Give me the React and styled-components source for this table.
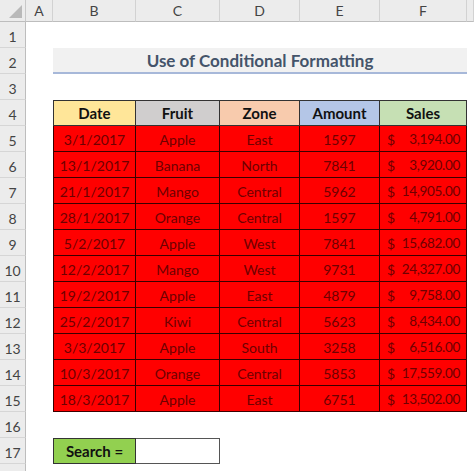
import React from 'react';
import styled, { createGlobalStyle } from 'styled-components';

const GlobalStyle = createGlobalStyle`
  html, body {
    margin: 0;
    padding: 0;
    background: #ffffff;
  }
  body {
    font-family: Lato, "Open Sans", "Liberation Sans", sans-serif;
    overflow: hidden;
  }
`;

// ======================== sheet ========================

const Sheet = styled.div`
  display: grid;
  grid-template-columns: 26px 27px 83px 84px 80px 80px 87px 1fr;
  grid-template-rows: 22px repeat(18, 26px);
  width: 474px;
  height: 471px;
  overflow: hidden;
  background: #ffffff;
`;

const Corner = styled.div`
  position: relative;
  background: #ececec;
  border-right: 1px solid #c8c8c8;
  border-bottom: 1px solid #bdbdbd;
  &::after {
    content: '';
    position: absolute;
    right: 3px;
    bottom: 3px;
    width: 0;
    height: 0;
    border-left: 13px solid transparent;
    border-bottom: 13px solid #b9b9b9;
  }
`;

const ColHead = styled.div`
  display: flex;
  align-items: center;
  justify-content: center;
  background: #ececec;
  border-right: 1px solid #d2d2d2;
  border-bottom: 1px solid #bdbdbd;
  color: #444444;
  font-size: 14px;
  box-sizing: border-box;
`;

const RowHead = styled.div`
  display: flex;
  align-items: center;
  justify-content: center;
  background: #ececec;
  border-right: 1px solid #bdbdbd;
  border-bottom: 1px solid #d6d6d6;
  color: #444444;
  font-size: 14px;
  padding-top: 3px;
  box-sizing: border-box;
`;

const Blank = styled.div``;

const Title = styled.div`
  grid-column: span 5;
  display: flex;
  align-items: center;
  justify-content: center;
  background: #f1f1f1;
  border-bottom: 2px solid #a7b8d9;
  color: #44546a;
  font-size: 17px;
  font-weight: 700;
  box-sizing: border-box;
  padding-top: 1px;
`;

const HeadCell = styled.div`
  display: flex;
  align-items: center;
  justify-content: center;
  background: ${(p) => p.bg};
  border-top: 1px solid #333333;
  border-right: 1px solid #333333;
  border-left: ${(p) => (p.first ? '1px solid #333333' : 'none')};
  border-bottom: 1px solid #333333;
  color: #111111;
  font-size: 15px;
  font-weight: 700;
  box-sizing: border-box;
`;

const DataCell = styled.div`
  display: flex;
  align-items: center;
  justify-content: center;
  background: #ff0000;
  border-right: 1px solid #3a0000;
  border-left: ${(p) => (p.first ? '1px solid #3a0000' : 'none')};
  border-bottom: 1px solid #3a0000;
  color: #6e0000;
  font-size: 14px;
  box-sizing: border-box;
  padding-top: 1px;
`;

const SalesCell = styled(DataCell)`
  justify-content: space-between;
  padding: 1px 6px 0 7px;
`;

const Amount = styled.span`
  font-size: 13.5px;
  letter-spacing: -0.3px;
`;

const SearchLabel = styled.div`
  display: flex;
  align-items: center;
  justify-content: center;
  background: #92d050;
  border: 1px solid #333333;
  color: #111111;
  font-size: 15px;
  font-weight: 700;
  box-sizing: border-box;
`;

const SearchBox = styled.div`
  background: #ffffff;
  border: 1px solid #555555;
  border-left: none;
  box-sizing: border-box;
`;

// ======================== data ========================

const cols = ['A', 'B', 'C', 'D', 'E', 'F', ''];

const heads = [
  { label: 'Date', bg: '#ffe699' },
  { label: 'Fruit', bg: '#d0cece' },
  { label: 'Zone', bg: '#f8cbad' },
  { label: 'Amount', bg: '#b4c6e7' },
  { label: 'Sales', bg: '#c6e0b4' },
];

const rows = [
  ['3/1/2017', 'Apple', 'East', '1597', '3,194.00'],
  ['13/1/2017', 'Banana', 'North', '7841', '3,920.00'],
  ['21/1/2017', 'Mango', 'Central', '5962', '14,905.00'],
  ['28/1/2017', 'Orange', 'Central', '1597', '4,791.00'],
  ['5/2/2017', 'Apple', 'West', '7841', '15,682.00'],
  ['12/2/2017', 'Mango', 'West', '9731', '24,327.00'],
  ['19/2/2017', 'Apple', 'East', '4879', '9,758.00'],
  ['25/2/2017', 'Kiwi', 'Central', '5623', '8,434.00'],
  ['3/3/2017', 'Apple', 'South', '3258', '6,516.00'],
  ['10/3/2017', 'Orange', 'Central', '5853', '17,559.00'],
  ['18/3/2017', 'Apple', 'East', '6751', '13,502.00'],
];

const emptyRow = (n, label = n) => (
  <React.Fragment key={n}>
    <RowHead>{label}</RowHead>
    {cols.map((c, i) => (
      <Blank key={i} />
    ))}
  </React.Fragment>
);

const App = () => {
  return (
    <>
      <GlobalStyle />
      <Sheet>
        <Corner />
        {cols.map((c, i) => (
          <ColHead key={i}>{c}</ColHead>
        ))}

        {emptyRow(1)}

        <RowHead>2</RowHead>
        <Blank />
        <Title>Use of Conditional Formatting</Title>
        <Blank />

        {emptyRow(3)}

        <RowHead>4</RowHead>
        <Blank />
        {heads.map((h, i) => (
          <HeadCell key={h.label} bg={h.bg} first={i === 0}>
            {h.label}
          </HeadCell>
        ))}
        <Blank />

        {rows.map((r, idx) => (
          <React.Fragment key={idx}>
            <RowHead>{idx + 5}</RowHead>
            <Blank />
            <DataCell first>{r[0]}</DataCell>
            <DataCell>{r[1]}</DataCell>
            <DataCell>{r[2]}</DataCell>
            <DataCell>{r[3]}</DataCell>
            <SalesCell>
              <span>$</span>
              <Amount>{r[4]}</Amount>
            </SalesCell>
            <Blank />
          </React.Fragment>
        ))}

        {emptyRow(16)}

        <RowHead>17</RowHead>
        <Blank />
        <SearchLabel>Search =</SearchLabel>
        <SearchBox />
        <Blank />
        <Blank />
        <Blank />
        <Blank />

        {/* row 18 sits below the window edge, its number is not visible */}
        {emptyRow(18, '')}
      </Sheet>
    </>
  );
};

export default App;
